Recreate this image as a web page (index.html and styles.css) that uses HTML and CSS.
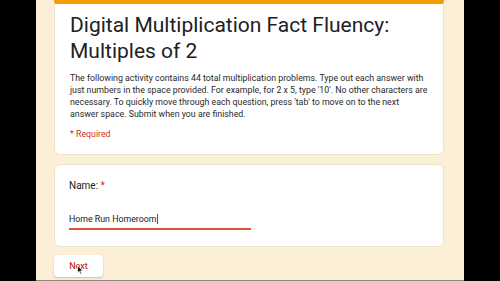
FILE: index.html
```html
<!DOCTYPE html>
<html lang="en">
<head>
	<meta charset="UTF-8">
	<title>Digital Multiplication Fact Fluency</title>
	<link rel="stylesheet" href="styles.css">
</head>
<body>
	<div class="frame">
		<div class="form">
			<div class="card head">
				<h1 class="title">Digital Multiplication Fact Fluency: Multiples of 2</h1>
				<p class="desc">The following activity contains 44 total multiplication problems. Type out each answer with just numbers in the space provided. For example, for 2 x 5, type '10'. No other characters are necessary. To quickly move through each question, press 'tab' to move on to the next answer space. Submit when you are finished.</p>
				<p class="req">* Required</p>
			</div>
			<div class="card question">
				<div class="label">Name: <span class="star">*</span></div>
				<div class="answer"><span class="typed">Home Run Homeroom</span><span class="caret"></span></div>
			</div>
			<div class="actions">
				<div class="nextBtn">Next
					<!-- 鼠标指针 -->
					<svg class="cursor" width="7" height="10" viewBox="0 0 7 10"><path d="M0.5 0.5 L0.5 8 L2.3 6.3 L3.6 9.2 L4.8 8.7 L3.6 5.9 L6 5.9 Z" fill="#111" stroke="#fff" stroke-width="0.8"/></svg>
				</div>
			</div>
		</div>
	</div>
</body>
</html>
```

FILE: styles.css
```css
*{
	box-sizing: border-box;
}
body{
	margin: 0;
	background: #000;
	font-family: Roboto, "Liberation Sans", Arial, sans-serif;
	color: #202124;
}
.frame{
	width: 428px;
	height: 281px;
	margin: 0 auto;
	background: #fcefd8;
	border-bottom: 1px solid #8a877d;
	overflow: hidden;
}
.form{
	width: 408px;
	padding-left: 18px;
	display: flex;
	flex-direction: column;
	gap: 9px;
}
.card{
	width: 390px;
	background: #fff;
	border: 1px solid #eee2cc;
	border-radius: 6px;
}
.head{
	height: 155px;
	border-top: 4px solid #f39c00;
	border-radius: 0 0 6px 6px;
	padding: 8px 12px 0 15px;
}
.title{
	margin: 0;
	font-size: 21px;
	line-height: 26px;
	font-weight: 400;
	width: 320px;
}
.desc{
	width: 358px;
	margin: 8px 0 0;
	font-size: 8.8px;
	line-height: 12px;
	color: #2a2a2a;
}
.req{
	margin: 8px 0 0;
	font-size: 8.8px;
	line-height: 12px;
	color: #d03224;
}
.question{
	height: 83px;
	padding: 14px 16px 0 14px;
}
.label{
	font-size: 10px;
	line-height: 14px;
}
.star{
	color: #d93025;
}
.answer{
	width: 182px;
	margin-top: 20px;
	padding-bottom: 3px;
	border-bottom: 2px solid #d9553a;
	font-size: 8.8px;
	line-height: 12px;
	display: flex;
	align-items: center;
}
.caret{
	width: 1px;
	height: 10px;
	margin-left: 1px;
	background: #555;
}
.actions{
	margin-top: -1px;
}
.nextBtn{
	position: relative;
	width: 49px;
	height: 22px;
	background: #fff;
	border-radius: 4px;
	box-shadow: 0 1px 2px rgba(120, 100, 60, 0.35);
	color: #c43b32;
	font-size: 9px;
	font-weight: 500;
	display: flex;
	align-items: center;
	justify-content: center;
}
.cursor{
	position: absolute;
	left: 23px;
	top: 10px;
}
```
